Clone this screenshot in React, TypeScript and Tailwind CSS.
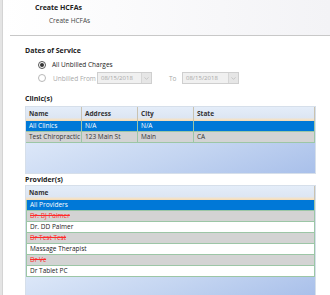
import { ChevronDown } from "lucide-react";

const clinics = [
  { name: "All Clinics", address: "N/A", city: "N/A", state: "", selected: true },
  { name: "Test Chiropractic", address: "123 Main St", city: "Main", state: "CA", selected: false },
];

const providers = [
  { name: "All Providers", inactive: false, selected: true },
  { name: "Dr. BJ Palmer", inactive: true },
  { name: "Dr. DD Palmer", inactive: false },
  { name: "Dr Test Test", inactive: true },
  { name: "Massage Therapist", inactive: false },
  { name: "Dr Vc", inactive: true },
  { name: "Dr Tablet PC", inactive: false },
];

function DateBox({ width }: { width: string }) {
  return (
    <div className={`${width} h-[12px] flex items-stretch border border-[#cfcfcf] bg-[#f0f0f0]`}>
      <span className="flex-1 pl-[3px] text-[6px] leading-[10px] text-[#a8a8a8]">08/15/2018</span>
      <span className="w-[10px] flex items-center justify-center border-l border-[#d6d6d6] bg-[#e6e6e6]">
        <ChevronDown className="w-[7px] h-[7px] text-[#b0b0b0]" strokeWidth={2} />
      </span>
    </div>
  );
}

const headerBg = "bg-[linear-gradient(to_bottom,#e4edf9_0%,#dde6f3_75%,#f3e2c8_90%,#f6d9b0_100%)]";
const emptyBg = "bg-[linear-gradient(160deg,#dce7f8_0%,#c4d5f1_50%,#a9c0ea_100%)]";

export default function App() {
  return (
    <div className="w-[330px] h-[295px] overflow-hidden flex bg-white text-[#222] font-['Open_Sans','Noto_Sans',sans-serif]">
      <div className="w-[3px] shrink-0 bg-[#e4e4e4] border-r border-[#d4d4d4]" />
      <div className="flex-1 flex flex-col">
        {/* ── Page header ─────────────────────────── */}
        <div className="h-[35px] pl-[32px] pt-[3px] bg-[linear-gradient(to_right,#ffffff,#f3f3f6)]">
          <p className="text-[7px] leading-[9px] font-bold">Create HCFAs</p>
          <p className="pl-[14px] pt-[4px] text-[6.5px] leading-[9px] text-[#444]">Create HCFAs</p>
        </div>
        <div className="ml-[7px] h-px bg-[#c8c8c8]" />

        {/* ── Dates of service ────────────────────── */}
        <div className="pl-[22px] pt-[10px]">
          <p className="text-[7px] leading-[10px] font-bold">Dates of Service</p>
          <div className="mt-[3px] pl-[13px] flex items-center gap-[6px] h-[11px]">
            <span className="w-[8px] h-[8px] rounded-full border border-[#555] flex items-center justify-center bg-white">
              <span className="w-[4px] h-[4px] rounded-full bg-[#333]" />
            </span>
            <span className="text-[6.5px] leading-[9px]">All Unbilled Charges</span>
          </div>
          <div className="mt-[2px] pl-[13px] flex items-center h-[12px]">
            <span className="w-[8px] h-[8px] rounded-full border border-[#b8b8b8] bg-white" />
            <span className="ml-[7px] w-[44px] text-[6.5px] leading-[9px] text-[#a8a8a8]">Unbilled From</span>
            <DateBox width="w-[55px]" />
            <span className="ml-[17px] w-[13px] text-[6.5px] leading-[9px] text-[#a8a8a8]">To</span>
            <DateBox width="w-[57px]" />
          </div>
        </div>

        {/* ── Clinics ─────────────────────────────── */}
        <div className="pl-[22px] pr-[14px] pt-[10px]">
          <p className="text-[7px] leading-[9px] font-bold">Clinic(s)</p>
          <div className="mt-[3px] h-[68px] flex flex-col border border-[#d6dfea]">
            <div className={`h-[14px] flex text-[6.5px] font-bold text-[#333] ${headerBg}`}>
              <span className="w-[56px] pl-[3px] leading-[13px] border-r border-[#c9c2b0]">Name</span>
              <span className="w-[56px] pl-[3px] leading-[13px] border-r border-[#c9c2b0]">Address</span>
              <span className="w-[56px] pl-[3px] leading-[13px] border-r border-[#c9c2b0]">City</span>
              <span className="flex-1 pl-[3px] leading-[13px] border-r border-[#c9c2b0]">State</span>
            </div>
            {clinics.map((c) => (
              <div
                key={c.name}
                className={`h-[11px] flex text-[6.5px] border-b border-[#9cc6a6] ${
                  c.selected ? "bg-[#0078d7] text-white" : "bg-[#d3d3d3] text-[#333]"
                }`}
              >
                <span className="w-[56px] pl-[3px] leading-[10px] whitespace-nowrap overflow-hidden border-r border-[#9cc6a6]">{c.name}</span>
                <span className="w-[56px] pl-[3px] leading-[10px] whitespace-nowrap overflow-hidden border-r border-[#9cc6a6]">{c.address}</span>
                <span className="w-[56px] pl-[3px] leading-[10px] border-r border-[#9cc6a6]">{c.city}</span>
                <span className="flex-1 pl-[3px] leading-[10px] border-r border-[#9cc6a6]">{c.state}</span>
              </div>
            ))}
            <div className={`flex-1 ${emptyBg}`} />
          </div>
        </div>

        {/* ── Providers ───────────────────────────── */}
        <div className="pl-[22px] pr-[14px] pt-[1px] flex-1 flex flex-col">
          <p className="text-[7px] leading-[9px] font-bold">Provider(s)</p>
          <div className="mt-[1px] flex-1 flex flex-col border border-[#d6dfea] border-b-0">
            <div className={`h-[14px] flex text-[6.5px] font-bold text-[#333] ${headerBg}`}>
              <span className="flex-1 pl-[3px] leading-[13px] border-r border-[#c9c2b0]">Name</span>
            </div>
            {providers.map((p) => (
              <div
                key={p.name}
                className={`h-[11px] pl-[3px] text-[6.5px] leading-[10px] border-b border-x border-[#9cc6a6] ${
                  p.selected
                    ? "bg-[#0078d7] text-white"
                    : p.inactive
                    ? "bg-[#d3d3d3] text-[#ff2b2b] line-through"
                    : "bg-white text-[#222]"
                }`}
              >
                {p.name}
              </div>
            ))}
            <div className={`flex-1 ${emptyBg}`} />
          </div>
        </div>
      </div>
    </div>
  );
}
